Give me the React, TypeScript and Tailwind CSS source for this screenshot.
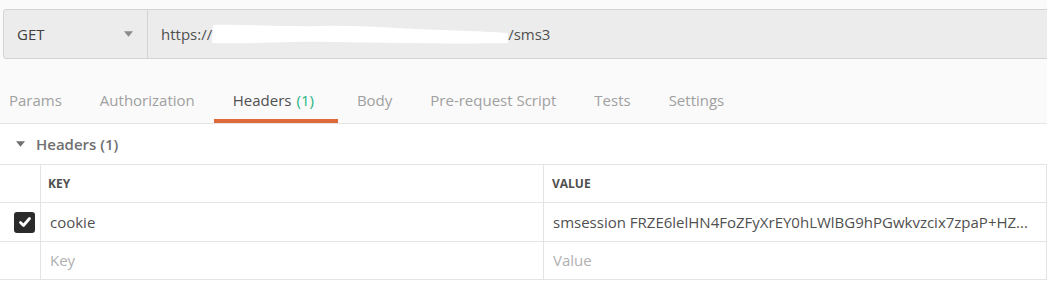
import React from 'react';

const tabs = [
    { label: 'Params' },
    { label: 'Authorization' },
    { label: 'Headers', count: '(1)', active: true },
    { label: 'Body' },
    { label: 'Pre-request Script' },
    { label: 'Tests' },
    { label: 'Settings' }
];

const Caret: React.FC<{ className?: string }> = ({ className }) => (
    <svg viewBox="0 0 10 6" className={className} fill="currentColor">
        <path d="M0 0 L10 0 L5 6 Z" />
    </svg>
);

const App: React.FC = () => {
    return (
        <div
            className="w-[1047px] h-[285px] overflow-hidden bg-white text-[#505050]"
            style={{ fontFamily: '"Open Sans", "Noto Sans", sans-serif' }}
        >
            {/* Request bar */}
            <div className="bg-[#fafafa] pt-[9px] pl-[3px]">
                <div className="flex h-[50px] w-[1060px] border border-[#d4d4d4] rounded-l-[3px] bg-[#ececec]">
                    <div className="flex w-[144px] shrink-0 items-center justify-between border-r border-[#d4d4d4] pl-[13px] pr-[14px]">
                        <span className="text-[15px] text-[#404040]">GET</span>
                        <Caret className="w-[9px] h-[6px] text-[#8a8a8a]" />
                    </div>
                    <div className="flex items-center pl-[13px] text-[15px] text-[#505050]">
                        <span>https://</span>
                        <span className="relative inline-block w-[296px] h-[14px]">
                            <svg viewBox="0 0 296 20" className="absolute left-0 top-[-3px] w-[296px] h-[20px]" fill="#ffffff">
                                <path d="M1 1 C30 0 70 3 110 2 C150 1 190 5 230 6 C260 7 284 8 296 9 L296 19 C250 20 180 19 120 18 C80 17 40 20 0 19 Z" />
                            </svg>
                        </span>
                        <span>/sms3</span>
                    </div>
                </div>
            </div>

            {/* Tabs */}
            <div className="flex h-[65px] items-end bg-[#fafafa] border-b border-[#e4e4e4]">
                {tabs.map((tab, i) => (
                    <div
                        key={tab.label}
                        className={`flex h-[42px] items-center border-b-4 text-[15px] ${i === 0 ? 'pl-[9px] pr-[19px]' : tab.active ? 'pl-[19px] pr-[24px]' : 'px-[19px]'} ${tab.active
                                ? 'border-[#e0693a] text-[#505050]'
                                : 'border-transparent text-[#a0a0a0]'
                            }`}
                    >
                        {tab.label}
                        {tab.count && <span className="ml-[5px] text-[#26b47f]">{tab.count}</span>}
                    </div>
                ))}
            </div>

            {/* Headers section */}
            <div className="flex h-[40px] items-center pl-[16px] gap-[11px]">
                <Caret className="w-[9px] h-[6px] text-[#707070]" />
                <span className="text-[15px] font-semibold text-[#707070]">Headers (1)</span>
            </div>

            <div className="border-t border-[#e4e4e4]">
                <div className="grid grid-cols-[41px_503px_503px] border-b border-[#e4e4e4] h-[38px]">
                    <div className="border-r border-[#e4e4e4]" />
                    <div className="flex items-center pl-[7px] border-r border-[#e4e4e4] text-[12px] font-bold text-[#505050]">KEY</div>
                    <div className="flex items-center pl-[8px] border-r border-[#e4e4e4] text-[12px] font-bold text-[#505050]">VALUE</div>
                </div>
                <div className="grid grid-cols-[41px_503px_503px] border-b border-[#e4e4e4] h-[39px]">
                    <div className="flex items-center pl-[14px] border-r border-[#e4e4e4]">
                        <span className="flex w-[21px] h-[21px] items-center justify-center rounded-[3px] bg-[#2b2b2b]">
                            <svg viewBox="0 0 14 14" className="w-[14px] h-[14px]" fill="none" stroke="#ffffff" strokeWidth="2.8" strokeLinecap="round" strokeLinejoin="round">
                                <path d="M2.5 7.5 L5.5 10.5 L11.5 3.5" />
                            </svg>
                        </span>
                    </div>
                    <div className="flex items-center pl-[9px] border-r border-[#e4e4e4] text-[15px] text-[#505050]">cookie</div>
                    <div className="flex items-center pl-[9px] border-r border-[#e4e4e4] text-[15px] text-[#505050] whitespace-nowrap overflow-hidden">
                        smsession FRZE6lelHN4FoZFyXrEY0hLWlBG9hPGwkvzcix7zpaP+HZ...
                    </div>
                </div>
                <div className="grid grid-cols-[41px_503px_503px] border-b border-[#e4e4e4] h-[38px]">
                    <div className="border-r border-[#e4e4e4]" />
                    <div className="flex items-center pl-[9px] border-r border-[#e4e4e4] text-[15px] text-[#b0b0b0]">Key</div>
                    <div className="flex items-center pl-[9px] border-r border-[#e4e4e4] text-[15px] text-[#b0b0b0]">Value</div>
                </div>
            </div>
        </div>
    );
};

export default App;
